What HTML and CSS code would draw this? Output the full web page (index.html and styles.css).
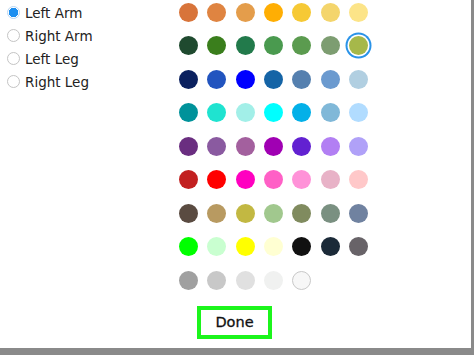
FILE: index.html
```html
<!DOCTYPE html>
<html lang="en">
<head>
    <meta charset="UTF-8">
    <title>Colour Picker</title>
    <link rel="stylesheet" href="styles.css">
</head>
<body>
    <div class="dialog">
        <div class="content">
            <div class="parts">
                <label class="part"><span class="radio checked"></span>Left Arm</label>
                <label class="part"><span class="radio"></span>Right Arm</label>
                <label class="part"><span class="radio"></span>Left Leg</label>
                <label class="part"><span class="radio"></span>Right Leg</label>
            </div>

            <div class="palette">
                <div class="swatch" style="background:#d8743a"></div>
                <div class="swatch" style="background:#df8441"></div>
                <div class="swatch" style="background:#e49d4b"></div>
                <div class="swatch" style="background:#ffae03"></div>
                <div class="swatch" style="background:#f6c935"></div>
                <div class="swatch" style="background:#f4d56c"></div>
                <div class="swatch" style="background:#fce488"></div>

                <div class="swatch" style="background:#1f4a2f"></div>
                <div class="swatch" style="background:#3a7e1c"></div>
                <div class="swatch" style="background:#227a4b"></div>
                <div class="swatch" style="background:#4a9a4f"></div>
                <div class="swatch" style="background:#5b9b4f"></div>
                <div class="swatch" style="background:#7d9d71"></div>
                <div class="swatch selected" style="background:#a6b84a"></div>

                <div class="swatch" style="background:#0b215f"></div>
                <div class="swatch" style="background:#2254bf"></div>
                <div class="swatch" style="background:#0000ff"></div>
                <div class="swatch" style="background:#1564a6"></div>
                <div class="swatch" style="background:#5580af"></div>
                <div class="swatch" style="background:#6b9acf"></div>
                <div class="swatch" style="background:#b1cfe1"></div>

                <div class="swatch" style="background:#00929a"></div>
                <div class="swatch" style="background:#1fe3d0"></div>
                <div class="swatch" style="background:#a2efe8"></div>
                <div class="swatch" style="background:#00ffff"></div>
                <div class="swatch" style="background:#03b0e8"></div>
                <div class="swatch" style="background:#80b8d8"></div>
                <div class="swatch" style="background:#b1dcff"></div>

                <div class="swatch" style="background:#6a2e80"></div>
                <div class="swatch" style="background:#8a5aa0"></div>
                <div class="swatch" style="background:#a3609e"></div>
                <div class="swatch" style="background:#a000b3"></div>
                <div class="swatch" style="background:#6221d1"></div>
                <div class="swatch" style="background:#b27ff3"></div>
                <div class="swatch" style="background:#b0a1f8"></div>

                <div class="swatch" style="background:#c22020"></div>
                <div class="swatch" style="background:#ff0000"></div>
                <div class="swatch" style="background:#ff00c0"></div>
                <div class="swatch" style="background:#ff60c6"></div>
                <div class="swatch" style="background:#ff92d8"></div>
                <div class="swatch" style="background:#e8b2c7"></div>
                <div class="swatch" style="background:#ffc8c9"></div>

                <div class="swatch" style="background:#5a4b41"></div>
                <div class="swatch" style="background:#b89a61"></div>
                <div class="swatch" style="background:#c2b842"></div>
                <div class="swatch" style="background:#a1c88e"></div>
                <div class="swatch" style="background:#808b5f"></div>
                <div class="swatch" style="background:#7a9081"></div>
                <div class="swatch" style="background:#7082a0"></div>

                <div class="swatch" style="background:#00ff00"></div>
                <div class="swatch" style="background:#c9ffd0"></div>
                <div class="swatch" style="background:#ffff00"></div>
                <div class="swatch" style="background:#ffffd2"></div>
                <div class="swatch" style="background:#111111"></div>
                <div class="swatch" style="background:#1b2a38"></div>
                <div class="swatch" style="background:#686368"></div>

                <div class="swatch" style="background:#a0a0a0"></div>
                <div class="swatch" style="background:#c8c8c8"></div>
                <div class="swatch" style="background:#e0e0e0"></div>
                <div class="swatch" style="background:#f0f1f0"></div>
                <div class="swatch outlined" style="background:#f7f7f7"></div>
            </div>
        </div>

        <div class="actions">
            <button class="btn-done">Done</button>
        </div>
    </div>
</body>
</html>
```

FILE: styles.css
```css
* {
    margin: 0;
    padding: 0;
    box-sizing: border-box;
}

body {
    font-family: 'DejaVu Sans', 'Noto Sans', sans-serif;
    background: #8a8a8a;
    color: #222;
    width: 474px;
    height: 355px;
    overflow: hidden;
}

.dialog {
    width: 471px;
    height: 348px;
    background: #fff;
    display: flex;
    flex-direction: column;
}

.content {
    display: flex;
}

.parts {
    width: 179px;
    padding: 1px 0 0 7px;
    display: flex;
    flex-direction: column;
}

.part {
    display: flex;
    align-items: center;
    gap: 5px;
    height: 23px;
    font-size: 13.5px;
}

.radio {
    width: 13px;
    height: 13px;
    border-radius: 50%;
    border: 1px solid #c4c4c4;
    background: #fff;
    flex-shrink: 0;
}

.radio.checked {
    border-color: #b9d6f2;
    background: radial-gradient(circle, #1d8ff0 0 4.5px, #fff 5px);
}

.palette {
    display: grid;
    grid-template-columns: repeat(7, 19px);
    grid-auto-rows: 19px;
    column-gap: 9.33px;
    row-gap: 14.5px;
    padding-top: 2.5px;
}

.swatch {
    width: 19px;
    height: 19px;
    border-radius: 50%;
}

.swatch.selected {
    box-shadow: 0 0 0 1.5px #fff, 0 0 0 3.5px #2a93e8;
}

.swatch.outlined {
    border: 1px solid #c8c8c8;
}

.actions {
    padding: 16px 0 0 197px;
}

.btn-done {
    width: 75px;
    height: 33px;
    border: 4px solid #1cf51c;
    background: #fff;
    font-family: inherit;
    font-size: 14.5px;
    color: #111;
    -webkit-text-stroke: 0.3px #111;
}
```
